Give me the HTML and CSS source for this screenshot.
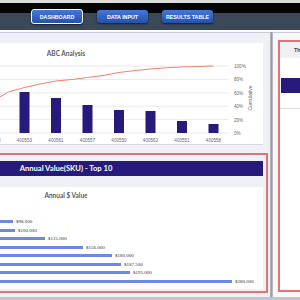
FILE: index.html
```html
<!DOCTYPE html>
<html>
<head>
<meta charset="utf-8">
<link rel="stylesheet" href="styles.css">
</head>
<body>
<header class="topbar">
  <nav class="nav">
    <div class="btn active">DASHBOARD</div>
    <div class="btn">DATA INPUT</div>
    <div class="btn">RESULTS TABLE</div>
  </nav>
</header>
<main class="main">
  <section class="left">
    <div class="chart-card">
      <div class="card-title">ABC Analysis</div>
      <svg class="abc" width="394" height="86" viewBox="0 0 394 86">
        <g stroke="#e3e3e3" stroke-width="0.8">
          <line x1="20" y1="8" x2="359" y2="8"/>
          <line x1="20" y1="21.4" x2="359" y2="21.4"/>
          <line x1="20" y1="34.8" x2="359" y2="34.8"/>
          <line x1="20" y1="48.2" x2="359" y2="48.2"/>
          <line x1="20" y1="61.6" x2="359" y2="61.6"/>
          <line x1="20" y1="75" x2="359" y2="75"/>
        </g>
        <g fill="#261b7a">
          <rect x="119" y="30" width="10" height="45"/>
          <rect x="150.5" y="34" width="10" height="41"/>
          <rect x="182" y="40" width="10" height="35"/>
          <rect x="213.5" y="47" width="10" height="28"/>
          <rect x="245" y="52" width="10" height="23"/>
          <rect x="276.5" y="53" width="10" height="22"/>
          <rect x="308" y="63" width="10" height="12"/>
          <rect x="339.5" y="66" width="10" height="9"/>
        </g>
        <polyline fill="none" stroke="#f0806e" stroke-width="1" points="92,49 108,46 124,43 139.5,34 155.5,29.5 171,26 187,23 203,21.5 218.5,19.5 234,17.5 250,14.5 266,12.5 281.5,11 297,9.8 313,9 329,8.5 344.5,8"/>
        <g class="xl" text-anchor="middle">
          <text x="124" y="84">400563</text>
          <text x="155.5" y="84">400553</text>
          <text x="187" y="84">400561</text>
          <text x="218.5" y="84">400557</text>
          <text x="250" y="84">400550</text>
          <text x="281.5" y="84">400562</text>
          <text x="313" y="84">400551</text>
          <text x="344.5" y="84">400558</text>
        </g>
        <g class="yl">
          <text x="365" y="10">100%</text>
          <text x="365" y="23.4">80%</text>
          <text x="365" y="36.8">60%</text>
          <text x="365" y="50.2">40%</text>
          <text x="365" y="63.6">20%</text>
          <text x="365" y="77">0%</text>
        </g>
        <text class="axis-title" transform="translate(383 40) rotate(-90)" text-anchor="middle">Cumulative</text>
      </svg>
    </div>
    <div class="red-box">
      <div class="band">Annual Value(SKU) - Top 10</div>
      <div class="sub"></div>
      <div class="bar-card">
        <div class="card-title">Annual $ Value</div>
        <div class="rows">
          <div class="row"><span class="bar" style="width:118px"></span><span class="val">$98.000</span></div>
          <div class="row"><span class="bar" style="width:120px"></span><span class="val">$100.000</span></div>
          <div class="row"><span class="bar" style="width:150px"></span><span class="val">$125.000</span></div>
          <div class="row"><span class="bar" style="width:188px"></span><span class="val">$156.000</span></div>
          <div class="row"><span class="bar" style="width:217px"></span><span class="val">$180.000</span></div>
          <div class="row"><span class="bar" style="width:226px"></span><span class="val">$187.500</span></div>
          <div class="row"><span class="bar" style="width:235px"></span><span class="val">$195.000</span></div>
          <div class="row"><span class="bar" style="width:337px"></span><span class="val">$280.000</span></div>
        </div>
      </div>
    </div>
  </section>
  <div class="divider"></div>
  <section class="right">
    <div class="red-box side">
      <div class="side-head">Throughput Time</div>
      <div class="side-gap"></div>
      <div class="side-bar"></div>
      <div class="side-row"></div>
    </div>
  </section>
</main>
<footer class="foot"></footer>
</body>
</html>
```

FILE: styles.css
```css
html, body {
  margin: 0;
  padding: 0;
}
body {
  width: 300px;
  height: 300px;
  overflow: hidden;
  background: #f0f0f7;
  font-family: Lato, "Open Sans", sans-serif;
}
.topbar {
  height: 30px;
  box-sizing: border-box;
  background: linear-gradient(to bottom, #dcdcdc 0, #dcdcdc 3px, #050505 3px, #050505 13px, #3b4858 13px, #3b4858 30px);
}
.nav {
  display: flex;
  align-items: flex-start;
  gap: 14px;
  padding: 9px 0 0 31px;
}
.btn {
  box-sizing: border-box;
  width: 51px;
  height: 13px;
  margin-top: 1px;
  border-radius: 3px;
  background: linear-gradient(to bottom, #4677d6, #2152b0);
  color: #fff;
  font-family: "Liberation Sans", sans-serif;
  font-weight: bold;
  font-size: 5.3px;
  display: flex;
  align-items: center;
  justify-content: center;
  box-shadow: 0 1px 2px rgba(0, 0, 0, 0.6);
}
.btn.active {
  width: 52px;
  height: 15px;
  margin-top: 0;
  border: 1px solid #ffffff;
}
.main {
  display: flex;
  height: 267px;
  padding-top: 2px;
  box-sizing: border-box;
  background: #fafafc;
}
.left {
  flex: none;
  box-sizing: border-box;
  width: 410px;
  margin-left: -140px;
  border-top: 1px solid #c9c9dc;
  background: #f0f0f7;
  padding: 10px 2px 0 9px;
}
.chart-card {
  background: #fff;
  height: 102px;
  box-sizing: border-box;
  margin-right: 5px;
  border-bottom: 1px solid #d6d6e0;
}
.card-title {
  text-align: center;
  font-size: 6.5px;
  line-height: 8px;
  font-weight: bold;
  color: #5a5a5a;
  padding-top: 7px;
}
.abc {
  display: block;
}
.abc .xl text, .abc .yl text {
  font-family: "Liberation Sans", sans-serif;
  font-size: 4.6px;
  fill: #6a6a6a;
}
.abc .axis-title {
  font-family: "Liberation Sans", sans-serif;
  font-size: 5px;
  fill: #6a6a6a;
}
.red-box {
  box-sizing: border-box;
  margin-top: 8px;
  margin-left: -4px;
  height: 140px;
  border: 2px solid #e07472;
  padding: 6px 3px 2px 2px;
  background: #f0f0f7;
}
.band {
  height: 15px;
  background: #261b7a;
  color: #fff;
  font-weight: bold;
  font-size: 7.6px;
  line-height: 15px;
  text-align: center;
}
.sub {
  height: 11px;
}
.bar-card {
  background: #fff;
  height: 102px;
  box-sizing: border-box;
}
.bar-card .card-title {
  padding-top: 5px;
}
.rows {
  display: grid;
  grid-auto-rows: 8.5px;
  padding: 17.5px 0 0 26px;
}
.row {
  display: flex;
  align-items: center;
}
.bar {
  display: block;
  height: 3px;
  background: #6f88e3;
}
.val {
  margin-left: 3px;
  font-family: "Liberation Serif", serif;
  font-size: 5px;
  color: #333;
}
.divider {
  flex: none;
  width: 3px;
  background: linear-gradient(to right, #b9b9c2, #9c9ca6, #c6c6ce);
}
.right {
  flex: none;
  width: 40px;
  box-sizing: border-box;
  border-top: 1px solid #c9c9dc;
  background: #f8f8fb;
  padding: 7px 0 0 5px;
}
.red-box.side {
  margin: 0;
  height: 252px;
  width: 60px;
  padding: 0;
  background: #fff;
}
.side-head {
  height: 16px;
  background: #f0f0f5;
  font-size: 5.5px;
  font-weight: bold;
  line-height: 16px;
  color: #404040;
  padding-left: 14px;
  white-space: nowrap;
}
.side-gap {
  height: 20px;
}
.side-bar {
  height: 15px;
  margin-left: 1px;
  background: #261b7a;
}
.side-row {
  height: 15px;
  border-bottom: 1px solid #dcdcdc;
}
.foot {
  height: 3px;
  background: #c3c3cb;
}
```
